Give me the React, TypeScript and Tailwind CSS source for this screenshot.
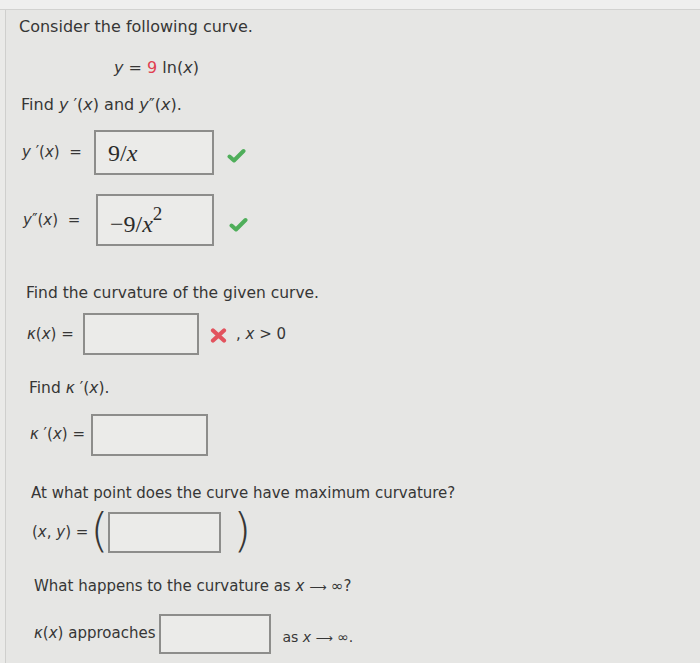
import React from "react";

const font = { fontFamily: '"DejaVu Sans", Verdana, sans-serif' };
const serif = { fontFamily: '"Liberation Serif", "Times New Roman", serif' };

const Check = () => (
  <svg width="19" height="15" viewBox="0 0 19 15" className="shrink-0">
    <path d="M2.5 8.5 L7 12.5 L16.5 3" fill="none" stroke="#4fae5a" strokeWidth="4" strokeLinecap="round" strokeLinejoin="round" />
  </svg>
);

const Cross = () => (
  <svg width="17" height="15" viewBox="0 0 17 15" className="shrink-0">
    <path d="M3 2.5 L14 12.5 M14 2.5 L3 12.5" stroke="#e2535e" strokeWidth="4.2" strokeLinecap="round" />
  </svg>
);

const Box = ({ w, h, children }: { w: string; h: string; children?: React.ReactNode }) => (
  <div className={`${w} ${h} border-2 border-[#8d8d8b] bg-[#ebebe9] flex items-center pl-3 text-[#2b2b2b]`}>
    {children}
  </div>
);

const Kappa = () => <span className="italic">κ</span>;

export default function App() {
  return (
    <div className="w-[700px] h-[663px] bg-[#eaeae8] overflow-hidden text-[#363636]" style={font}>
      <div className="h-[10px] bg-[#efefee] border-b border-[#d2d2d0]" />
      <div className="ml-[5px] h-[653px] border-l border-[#cfcfcd] bg-[#e6e6e4] text-[16px]">
        <div className="pl-[13px] pt-[5px]">Consider the following curve.</div>
        <div className="pl-[108px] pt-[17px]">
          <span className="italic">y</span> = <span className="text-[#e0404f]">9</span> ln(<span className="italic">x</span>)
        </div>
        <div className="pl-[15px] pt-[13px]">
          Find <span className="italic">y</span> ′(<span className="italic">x</span>) and <span className="italic">y</span>″(<span className="italic">x</span>).
        </div>

        <div className="pl-[16px] pt-[13px] flex items-center">
          <span className="w-[72px] text-[15px]"><span className="italic">y</span> ′(<span className="italic">x</span>) &nbsp;=</span>
          <Box w="w-[120px]" h="h-[45px]">
            <span className="text-[24px]" style={serif}>9/<span className="italic">x</span></span>
          </Box>
          <div className="ml-[13px] mt-[5px]"><Check /></div>
        </div>

        <div className="pl-[17px] pt-[19px] flex items-center">
          <span className="w-[73px] text-[15px]"><span className="italic">y</span>″(<span className="italic">x</span>) &nbsp;=</span>
          <Box w="w-[118px]" h="h-[52px]">
            <span className="text-[24px] mt-[8px]" style={serif}>
              −9/<span className="italic">x</span><span className="text-[19px] relative -top-[12px]">2</span>
            </span>
          </Box>
          <div className="ml-[15px] mt-[9px]"><Check /></div>
        </div>

        <div className="pl-[20px] pt-[36px] text-[15.5px]">Find the curvature of the given curve.</div>

        <div className="pl-[21px] pt-[8px] flex items-center">
          <span className="w-[56px] text-[15px]"><Kappa />(<span className="italic">x</span>) =</span>
          <Box w="w-[116px]" h="h-[42px]" />
          <div className="ml-[11px] mt-[2px]"><Cross /></div>
          <span className="ml-[9px] text-[15px]">, <span className="italic">x</span> &gt; 0</span>
        </div>

        <div className="pl-[23px] pt-[22px] text-[15.5px]">Find <Kappa /> ′(<span className="italic">x</span>).</div>

        <div className="pl-[24px] pt-[13px] flex items-center">
          <span className="w-[61px] text-[15px]"><Kappa /> ′(<span className="italic">x</span>) =</span>
          <Box w="w-[117px]" h="h-[42px]" />
        </div>

        <div className="pl-[25px] pt-[26px] text-[15px]">At what point does the curve have maximum curvature?</div>

        <div className="pl-[26px] pt-[7px] flex items-center">
          <span className="text-[15px]">(<span className="italic">x</span>, <span className="italic">y</span>) =</span>
          <span className="text-[46px] leading-none ml-[2px] -mt-[4px]" style={{ fontWeight: 200 }}>(</span>
          <Box w="w-[113px]" h="h-[41px]" />
          <span className="text-[46px] leading-none ml-[12px] -mt-[4px]" style={{ fontWeight: 200 }}>)</span>
        </div>

        <div className="pl-[28px] pt-[22px] text-[15px]">
          What happens to the curvature as <span className="italic">x</span> <span className="text-[12px]">⟶</span> ∞?
        </div>

        <div className="pl-[28px] pt-[16px] flex items-center">
          <span className="text-[15px]"><Kappa />(<span className="italic">x</span>) approaches</span>
          <div className="ml-[4px]"><Box w="w-[112px]" h="h-[40px]" /></div>
          <span className="ml-[11px] mt-[8px] text-[14px]">as <span className="italic">x</span> <span className="text-[12px]">⟶</span> ∞.</span>
        </div>
      </div>
    </div>
  );
}
